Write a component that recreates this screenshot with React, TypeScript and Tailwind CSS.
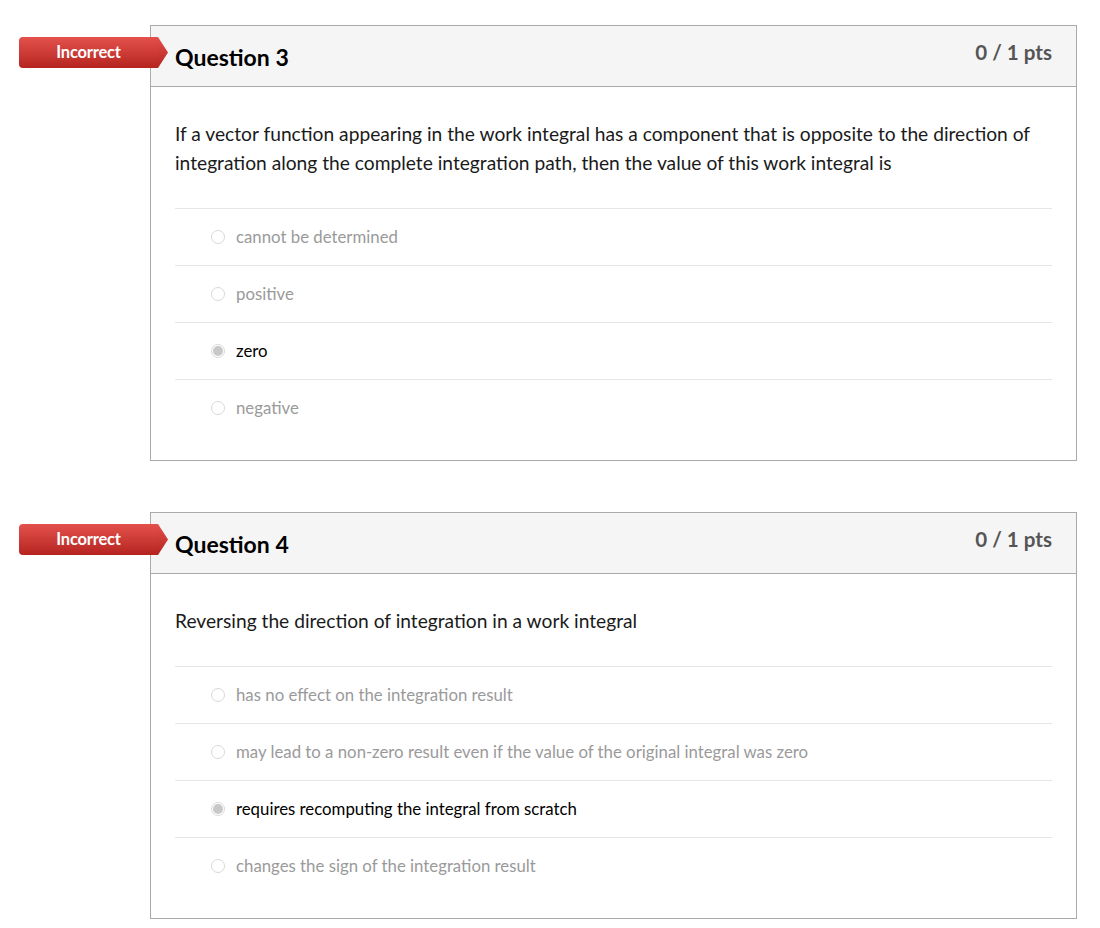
const font = { fontFamily: "Lato, 'Open Sans', sans-serif" }

interface QuestionProps {
  number: number
  prompt: string
  answers: string[]
  selected: number
}

function Badge() {
  return (
    <div className="absolute left-[-132px] top-[11px] flex h-[31px] items-center">
      <div className="flex h-[31px] w-[139px] items-center justify-center rounded-l-[4px] bg-gradient-to-b from-[#e4514c] to-[#b5231f] text-[16.5px] font-bold tracking-[-0.2px] text-white">
        Incorrect
      </div>
      <svg width="11" height="31" viewBox="0 0 11 31" className="-ml-px">
        <defs>
          <linearGradient id="bg" x1="0" y1="0" x2="0" y2="1">
            <stop offset="0" stopColor="#e4514c" />
            <stop offset="1" stopColor="#b5231f" />
          </linearGradient>
        </defs>
        <polygon points="0,0 1,0 11,15.5 1,31 0,31" fill="url(#bg)" />
      </svg>
    </div>
  )
}

function Radio({ checked }: { checked: boolean }) {
  return (
    <span className="flex h-[14px] w-[14px] shrink-0 items-center justify-center rounded-full border border-[#d9d9d9] bg-white">
      {checked ? <span className="h-[10px] w-[10px] rounded-full bg-[#c8c8c8]" /> : null}
    </span>
  )
}

function Question({ number, prompt, answers, selected }: QuestionProps) {
  return (
    <div className="relative ml-[150px] w-[927px] border border-[#aaaaaa] bg-white">
      <Badge />
      <div className="flex h-[61px] items-start justify-between border-b border-[#aaaaaa] bg-[#f5f5f5] pl-6 pr-6">
        <h2 className="pt-[16px] text-[23px] font-bold leading-[30px] text-black">Question {number}</h2>
        <span className="pt-[12px] text-[20.6px] font-bold leading-[28px] text-[#555555]">0 / 1 pts</span>
      </div>
      <div className="px-6 pb-6 pt-[32px]">
        <p className="pb-[31px] text-[19.2px] leading-[29px] text-[#1a1a1a]">{prompt}</p>
        <div>
          {answers.map((a, i) => (
            <div key={a} className="flex h-[57px] items-center gap-[11px] border-t border-[#e6e6e6] pl-[36px]">
              <Radio checked={i === selected} />
              <span className={i === selected ? "text-[16.8px] text-black" : "text-[16.8px] text-[#9a9a9a]"}>{a}</span>
            </div>
          ))}
        </div>
      </div>
    </div>
  )
}

export default function App() {
  return (
    <div className="min-h-[928px] bg-white pt-[25px]" style={font}>
      <Question
        number={3}
        prompt="If a vector function appearing in the work integral has a component that is opposite to the direction of integration along the complete integration path, then the value of this work integral is"
        answers={["cannot be determined", "positive", "zero", "negative"]}
        selected={2}
      />
      <div className="h-[51px]" />
      <Question
        number={4}
        prompt="Reversing the direction of integration in a work integral"
        answers={[
          "has no effect on the integration result",
          "may lead to a non-zero result even if the value of the original integral was zero",
          "requires recomputing the integral from scratch",
          "changes the sign of the integration result",
        ]}
        selected={2}
      />
    </div>
  )
}
